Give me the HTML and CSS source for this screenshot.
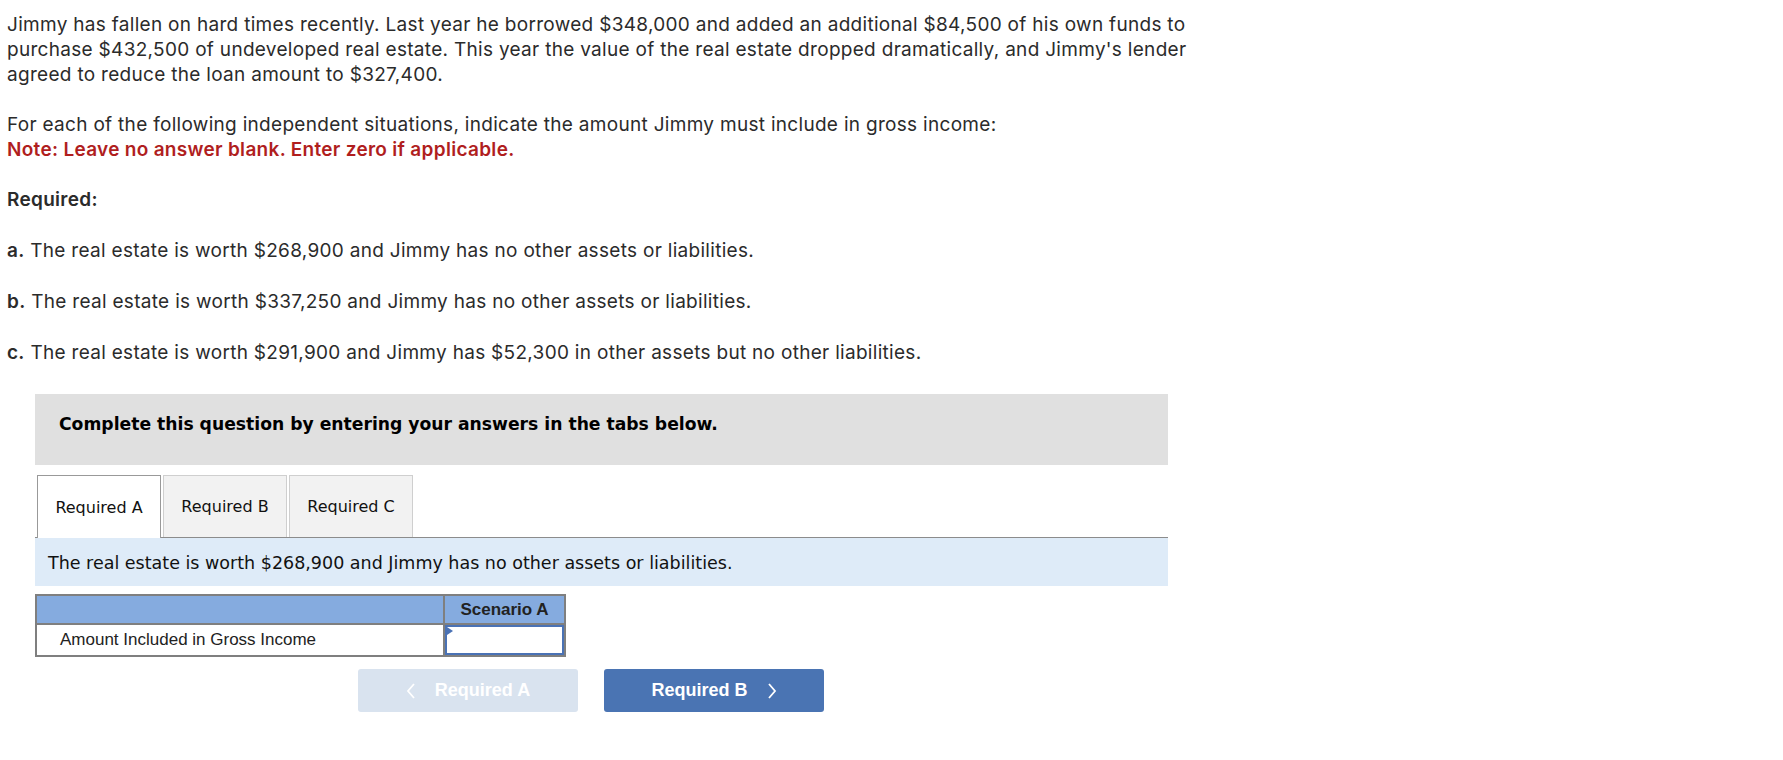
FILE: index.html
```html
<!DOCTYPE html>
<html lang="en">
<head>
    <meta charset="UTF-8">
    <title>Gross Income - Debt Forgiveness</title>
    <link rel="stylesheet" href="styles.css">
</head>
<body>

<section class="question">
    <p class="intro">Jimmy has fallen on hard times recently. Last year he borrowed $348,000 and added an additional $84,500 of his own funds to purchase $432,500 of undeveloped real estate. This year the value of the real estate dropped dramatically, and Jimmy's lender agreed to reduce the loan amount to $327,400.</p>

    <p class="prompt">For each of the following independent situations, indicate the amount Jimmy must include in gross income:<br>
        <strong class="note">Note: Leave no answer blank. Enter zero if applicable.</strong></p>

    <p class="required"><strong>Required:</strong></p>

    <p class="part"><strong>a.</strong> The real estate is worth $268,900 and Jimmy has no other assets or liabilities.</p>
    <p class="part"><strong>b.</strong> The real estate is worth $337,250 and Jimmy has no other assets or liabilities.</p>
    <p class="part"><strong>c.</strong> The real estate is worth $291,900 and Jimmy has $52,300 in other assets but no other liabilities.</p>
</section>

<section class="answer-area">
    <div class="instructions">Complete this question by entering your answers in the tabs below.</div>

    <div class="tabs">
        <a class="tab active" href="#req-a">Required A</a>
        <a class="tab" href="#req-b">Required B</a>
        <a class="tab" href="#req-c">Required C</a>
    </div>

    <div class="tab-body" id="req-a">
        <div class="tab-prompt">The real estate is worth $268,900 and Jimmy has no other assets or liabilities.</div>

        <table class="grid">
            <tr class="grid-head">
                <th class="label-col"></th>
                <th class="value-col">Scenario A</th>
            </tr>
            <tr>
                <td class="label-col">Amount Included in Gross Income</td>
                <td class="value-col input-cell"><input type="text" aria-label="Amount Included in Gross Income"></td>
            </tr>
        </table>

        <div class="nav-buttons">
            <button class="nav-btn prev" disabled>
                <svg class="chev" width="9" height="16" viewBox="0 0 9 16"><path d="M8 1 L2 8 L8 15" fill="none" stroke="currentColor" stroke-width="1.8"/></svg>
                Required A
            </button>
            <button class="nav-btn next">
                Required B
                <svg class="chev" width="9" height="16" viewBox="0 0 9 16"><path d="M1 1 L7 8 L1 15" fill="none" stroke="currentColor" stroke-width="1.8"/></svg>
            </button>
        </div>
    </div>
</section>

</body>
</html>
```

FILE: styles.css
```css
body {
    margin: 0;
    padding: 12px 0 0 7px;
    font-family: 'Inter', 'Liberation Sans', sans-serif;
    font-size: 19px;
    color: #2b2b2b;
    background: #fff;
}

.question p {
    margin: 0;
    line-height: 25px;
    letter-spacing: 0.3px;
}

.intro {
    max-width: 1200px;
}

.prompt {
    margin-top: 25px !important;
}

.note {
    color: #b01e1e;
    font-weight: 600;
}

.required {
    margin-top: 25px !important;
}

.required strong,
.part strong {
    font-weight: 600;
}

.part {
    margin-top: 26px !important;
}

.answer-area {
    width: 1133px;
    margin: 29px 0 0 28px;
    font-family: 'DejaVu Sans', Verdana, sans-serif;
}

.instructions {
    background-color: #e0e0e0;
    color: #000;
    font-weight: bold;
    font-size: 17.2px;
    line-height: 20px;
    padding: 20px 24px 31px;
}

.tabs {
    display: flex;
    gap: 2px;
    margin-top: 10px;
    padding-left: 2px;
    border-bottom: 1px solid #8c8c8c;
}

.tab {
    width: 122px;
    height: 61px;
    display: flex;
    align-items: center;
    justify-content: center;
    font-size: 16px;
    color: #111;
    text-decoration: none;
    background-color: #f2f2f2;
    border: 1px solid #cfcfcf;
    border-bottom: none;
}

.tab.active {
    background-color: #fff;
    border-color: #999;
    margin-bottom: -1px;
    height: 62px;
}

.tab-prompt {
    background-color: #deebf8;
    color: #111;
    font-size: 17.5px;
    line-height: 20px;
    padding: 15px 13px 13px;
}

.grid {
    margin-top: 8px;
    border-collapse: collapse;
    font-family: 'Liberation Sans', Arial, sans-serif;
    font-size: 17px;
    color: #222;
}

.grid th, .grid td {
    border: 2px solid #7f7f7f;
    padding: 0;
    height: 27px;
}

.grid-head th {
    background-color: #85abdf;
    font-weight: bold;
    text-align: center;
}

.label-col {
    width: 383px;
    text-align: left;
    padding-left: 23px !important;
}

.value-col {
    width: 119px;
}

.input-cell {
    position: relative;
    height: 28px !important;
}

.input-cell input {
    display: block;
    box-sizing: border-box;
    width: 100%;
    height: 30px;
    border: 2px solid #4a72b5;
    outline: none;
    font-size: 16px;
}

.input-cell::before {
    content: "";
    position: absolute;
    top: 2px;
    left: 2px;
    border-top: 4px solid transparent;
    border-bottom: 4px solid transparent;
    border-left: 6px solid #4a72b5;
}

.nav-buttons {
    display: flex;
    gap: 26px;
    margin: 12px 0 0 323px;
}

.nav-btn {
    width: 220px;
    height: 43px;
    border: none;
    border-radius: 3px;
    color: #fff;
    font-family: 'Liberation Sans', Arial, sans-serif;
    font-size: 18px;
    font-weight: bold;
    display: flex;
    align-items: center;
    justify-content: center;
    gap: 20px;
    padding: 0;
}

.prev {
    background-color: #d9e3ef;
}

.next {
    background-color: #4a74b3;
    cursor: pointer;
}
```
